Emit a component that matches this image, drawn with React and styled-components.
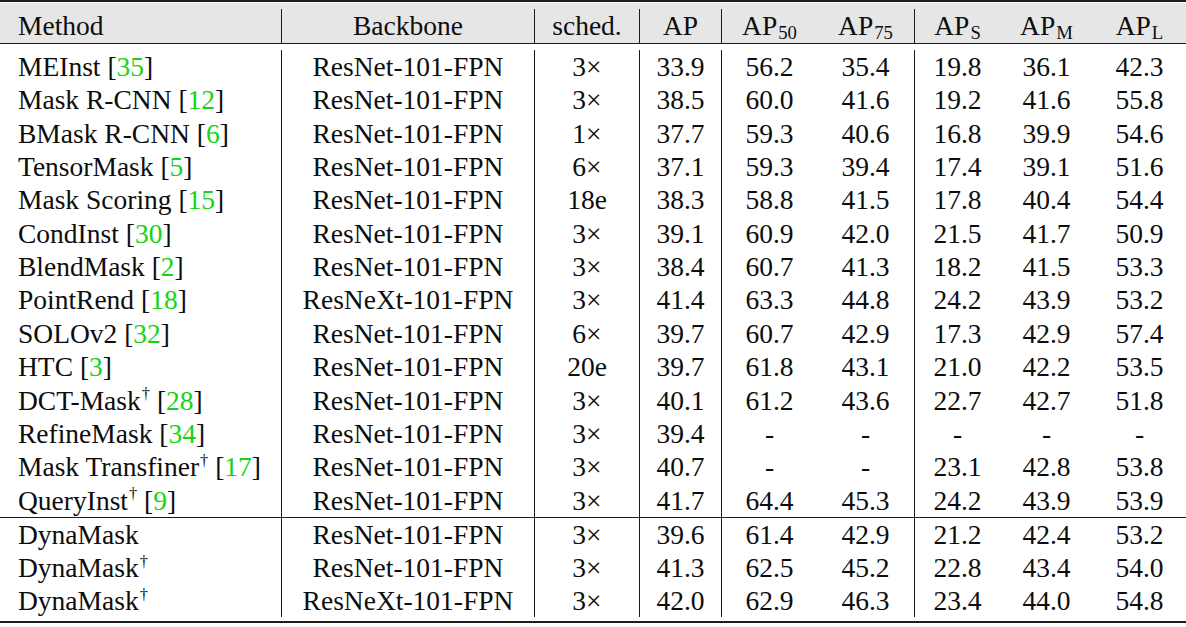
import React from "react";
import styled, { createGlobalStyle } from "styled-components";

const Global = createGlobalStyle`
  html, body { margin: 0; padding: 0; background: #fff; }
  body { font-family: "Liberation Serif", "Times New Roman", serif; color: #111; }
`;

const COLS = "281px 253px 105px 82px 96px 97px 86px 93px 93px";

const Table = styled.div`
  width: 1186px;
  display: flex;
  flex-direction: column;
  font-family: "Liberation Serif", "Times New Roman", serif;
  font-size: 27.5px;
  color: #0d0d0d;
`;

const Rule = styled.div`
  height: ${(p) => (p.$thick ? "2px" : "1px")};
  background: #1c1c1c;
  margin-top: ${(p) => p.$before || 0}px;
  margin-bottom: ${(p) => p.$after || 0}px;
`;

const HeaderBand = styled.div`
  background: #e6e6e6;
  padding-top: 6px;
`;

const Row = styled.div`
  display: grid;
  grid-template-columns: ${COLS};
  height: ${(p) => p.$h}px;
`;

const Cell = styled.div`
  display: flex;
  align-items: center;
  justify-content: ${(p) => (p.$left ? "flex-start" : "center")};
  padding-left: ${(p) => (p.$left ? "18px" : "0")};
  border-left: ${(p) => (p.$div ? "1px solid #1c1c1c" : "none")};
  box-sizing: border-box;
  white-space: nowrap;
  line-height: 1;
`;

const Label = styled.span`
  white-space: nowrap;
`;

const Sub = styled.span`
  font-size: 0.68em;
  vertical-align: -0.22em;
  line-height: 0;
  margin-left: 1px;
`;

const Sup = styled.span`
  font-size: 0.6em;
  vertical-align: 0.62em;
  line-height: 0;
  margin-left: 1px;
`;

const Cite = styled.span`
  color: #14d414;
`;

const Gap = styled.span`
  display: inline-block;
  width: 0.25em;
`;

const DIVIDERS = [false, true, true, true, true, false, true, false, false];

const head = [
  "Method",
  "Backbone",
  "sched.",
  "AP",
  <>AP<Sub>50</Sub></>,
  <>AP<Sub>75</Sub></>,
  <>AP<Sub>S</Sub></>,
  <>AP<Sub>M</Sub></>,
  <>AP<Sub>L</Sub></>,
];

const R50 = "ResNet-101-FPN";
const X101 = "ResNeXt-101-FPN";

const main = [
  ["MEInst", false, 35, R50, "3×", "33.9", "56.2", "35.4", "19.8", "36.1", "42.3"],
  ["Mask R-CNN", false, 12, R50, "3×", "38.5", "60.0", "41.6", "19.2", "41.6", "55.8"],
  ["BMask R-CNN", false, 6, R50, "1×", "37.7", "59.3", "40.6", "16.8", "39.9", "54.6"],
  ["TensorMask", false, 5, R50, "6×", "37.1", "59.3", "39.4", "17.4", "39.1", "51.6"],
  ["Mask Scoring", false, 15, R50, "18e", "38.3", "58.8", "41.5", "17.8", "40.4", "54.4"],
  ["CondInst", false, 30, R50, "3×", "39.1", "60.9", "42.0", "21.5", "41.7", "50.9"],
  ["BlendMask", false, 2, R50, "3×", "38.4", "60.7", "41.3", "18.2", "41.5", "53.3"],
  ["PointRend", false, 18, X101, "3×", "41.4", "63.3", "44.8", "24.2", "43.9", "53.2"],
  ["SOLOv2", false, 32, R50, "6×", "39.7", "60.7", "42.9", "17.3", "42.9", "57.4"],
  ["HTC", false, 3, R50, "20e", "39.7", "61.8", "43.1", "21.0", "42.2", "53.5"],
  ["DCT-Mask", true, 28, R50, "3×", "40.1", "61.2", "43.6", "22.7", "42.7", "51.8"],
  ["RefineMask", false, 34, R50, "3×", "39.4", "-", "-", "-", "-", "-"],
  ["Mask Transfiner", true, 17, R50, "3×", "40.7", "-", "-", "23.1", "42.8", "53.8"],
  ["QueryInst", true, 9, R50, "3×", "41.7", "64.4", "45.3", "24.2", "43.9", "53.9"],
];

const ours = [
  ["DynaMask", false, null, R50, "3×", "39.6", "61.4", "42.9", "21.2", "42.4", "53.2"],
  ["DynaMask", true, null, R50, "3×", "41.3", "62.5", "45.2", "22.8", "43.4", "54.0"],
  ["DynaMask", true, null, X101, "3×", "42.0", "62.9", "46.3", "23.4", "44.0", "54.8"],
];

function MethodName({ name, dagger, cite }) {
  return (
    <Label>
      {name}
      {dagger && <Sup>†</Sup>}
      {cite != null && (
        <>
          <Gap />[<Cite>{cite}</Cite>]
        </>
      )}
    </Label>
  );
}

function DataRow({ r, h }) {
  const [name, dagger, cite, ...rest] = r;
  return (
    <Row $h={h}>
      <Cell $left>
        <MethodName name={name} dagger={dagger} cite={cite} />
      </Cell>
      {rest.map((v, i) => (
        <Cell key={i} $div={DIVIDERS[i + 1]}>
          <Label>{v}</Label>
        </Cell>
      ))}
    </Row>
  );
}

export default function App() {
  return (
    <>
      <Global />
      <Table>
        <Rule $thick $after={1} />
        <HeaderBand>
          <Row $h={34}>
            {head.map((h, i) => (
              <Cell key={i} $left={i === 0} $div={DIVIDERS[i]}>
                <Label>{h}</Label>
              </Cell>
            ))}
          </Row>
        </HeaderBand>
        <Rule $after={6} />
        {main.map((r, i) => (
          <DataRow key={i} r={r} h={33.36} />
        ))}
        <Rule />
        {ours.map((r, i) => (
          <DataRow key={i} r={r} h={33} />
        ))}
        <Rule $thick $before={4} />
      </Table>
    </>
  );
}
